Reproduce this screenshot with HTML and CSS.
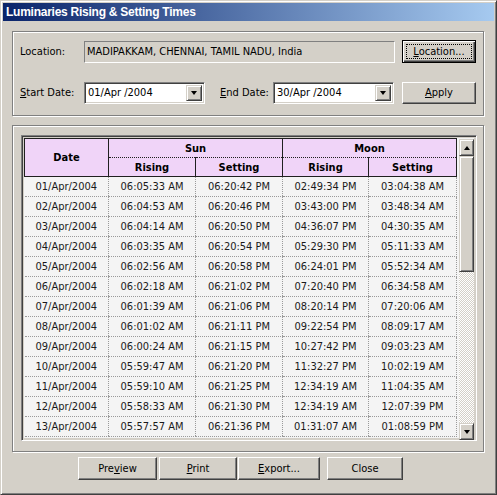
FILE: index.html
```html
<!DOCTYPE html>
<html>
<head>
<meta charset="utf-8">
<link rel="stylesheet" href="styles.css">
</head>
<body>
<div class="window">
  <div class="titlebar">Luminaries Rising &amp; Setting Times</div>
  <div class="content">
    <div class="group group-top">
      <div class="row row1">
        <span class="label lbl-loc">Location:</span>
        <div class="field">MADIPAKKAM, CHENNAI, TAMIL NADU, India</div>
        <button class="btn btn-default"><span class="focus"><u>L</u>ocation...</span></button>
      </div>
      <div class="row row2">
        <span class="label lbl-start"><u>S</u>tart Date:</span>
        <div class="combo"><span class="combo-text">01/Apr /2004</span><span class="drop"><span class="tri"></span></span></div>
        <span class="label lbl-end"><u>E</u>nd Date:</span>
        <div class="combo"><span class="combo-text">30/Apr /2004</span><span class="drop"><span class="tri"></span></span></div>
        <button class="btn btn-apply"><u>A</u>pply</button>
      </div>
    </div>
    <div class="group group-table">
      <div class="frame">
        <div class="grid-wrap">
          <table class="grid">
            <colgroup><col class="c1"><col class="c2"><col class="c3"><col class="c4"><col class="c5"></colgroup>
            <thead>
              <tr><th rowspan="2" class="h-date">Date</th><th colspan="2">Sun</th><th colspan="2">Moon</th></tr>
              <tr><th>Rising</th><th>Setting</th><th>Rising</th><th>Setting</th></tr>
            </thead>
            <tbody>
              <tr><td>01/Apr/2004</td><td>06:05:33 AM</td><td>06:20:42 PM</td><td>02:49:34 PM</td><td>03:04:38 AM</td></tr>
              <tr><td>02/Apr/2004</td><td>06:04:53 AM</td><td>06:20:46 PM</td><td>03:43:00 PM</td><td>03:48:34 AM</td></tr>
              <tr><td>03/Apr/2004</td><td>06:04:14 AM</td><td>06:20:50 PM</td><td>04:36:07 PM</td><td>04:30:35 AM</td></tr>
              <tr><td>04/Apr/2004</td><td>06:03:35 AM</td><td>06:20:54 PM</td><td>05:29:30 PM</td><td>05:11:33 AM</td></tr>
              <tr><td>05/Apr/2004</td><td>06:02:56 AM</td><td>06:20:58 PM</td><td>06:24:01 PM</td><td>05:52:34 AM</td></tr>
              <tr><td>06/Apr/2004</td><td>06:02:18 AM</td><td>06:21:02 PM</td><td>07:20:40 PM</td><td>06:34:58 AM</td></tr>
              <tr><td>07/Apr/2004</td><td>06:01:39 AM</td><td>06:21:06 PM</td><td>08:20:14 PM</td><td>07:20:06 AM</td></tr>
              <tr><td>08/Apr/2004</td><td>06:01:02 AM</td><td>06:21:11 PM</td><td>09:22:54 PM</td><td>08:09:17 AM</td></tr>
              <tr><td>09/Apr/2004</td><td>06:00:24 AM</td><td>06:21:15 PM</td><td>10:27:42 PM</td><td>09:03:23 AM</td></tr>
              <tr><td>10/Apr/2004</td><td>05:59:47 AM</td><td>06:21:20 PM</td><td>11:32:27 PM</td><td>10:02:19 AM</td></tr>
              <tr><td>11/Apr/2004</td><td>05:59:10 AM</td><td>06:21:25 PM</td><td>12:34:19 AM</td><td>11:04:35 AM</td></tr>
              <tr><td>12/Apr/2004</td><td>05:58:33 AM</td><td>06:21:30 PM</td><td>12:34:19 AM</td><td>12:07:39 PM</td></tr>
              <tr><td>13/Apr/2004</td><td>05:57:57 AM</td><td>06:21:36 PM</td><td>01:31:07 AM</td><td>01:08:59 PM</td></tr>
            </tbody>
          </table>
          <div class="scrollbar">
            <div class="sb-btn"><span class="tri-up"></span></div>
            <div class="sb-thumb"></div>
            <div class="sb-track"></div>
            <div class="sb-btn"><span class="tri"></span></div>
          </div>
        </div>
      </div>
    </div>
    <div class="buttons">
      <button class="btn b-prev">Pre<u>v</u>iew</button>
      <button class="btn b-print"><u>P</u>rint</button>
      <button class="btn b-export"><u>E</u>xport...</button>
      <button class="btn b-close">Close</button>
    </div>
  </div>
</div>
</body>
</html>
```
FILE: styles.css
```css
* { box-sizing: border-box; }
html, body { margin: 0; padding: 0; background: #d4d0c8; }
body {
  font-family: "DejaVu Sans Condensed", "DejaVu Sans", Tahoma, sans-serif;
  font-stretch: semi-condensed;
  font-size: 11px; color: #000;
}
u { text-decoration: underline; }

.window {
  width: 497px; height: 495px;
  background: #d4d0c8;
  border: 1px solid;
  border-color: #d4d0c8 #404040 #404040 #d4d0c8;
  box-shadow: inset 1px 1px 0 #fff, inset -1px -1px 0 #808080;
  padding: 2px;
}
.titlebar {
  height: 18px;
  background: linear-gradient(to right, #0a246a, #a6caf0);
  color: #fff;
  font-family: "Liberation Sans", Arial, sans-serif;
  font-stretch: normal;
  font-weight: bold;
  font-size: 12px;
  letter-spacing: -0.25px;
  line-height: 18px;
  padding-left: 3px;
}
.content { padding: 10px 10px 0 9px; }

.group {
  border: 1px solid #808080;
  box-shadow: 1px 1px 0 #fff, inset 1px 1px 0 #fff;
}
.group-top { height: 85px; padding: 8px 0 0 7px; }

.row { display: flex; align-items: center; }
.row1 { height: 23px; }
.row2 { margin-top: 18px; height: 23px; }
.label { white-space: nowrap; }
.lbl-loc, .lbl-start { width: 64px; }
.lbl-end { width: 53px; margin-left: 15px; }

.field {
  width: 311px; height: 22px;
  border: 1px solid;
  border-color: #808080 #fff #fff #808080;
  background: #d4d0c8;
  line-height: 20px;
  padding-left: 2px;
  white-space: nowrap; overflow: hidden;
}
.btn {
  font-family: inherit; font-stretch: inherit; font-size: 11px; color: #000;
  background: #d4d0c8;
  border: 1px solid;
  border-color: #fff #404040 #404040 #fff;
  box-shadow: inset -1px -1px 0 #808080;
  padding: 0; margin: 0;
  height: 23px;
}
.btn-default {
  margin-left: 7px; width: 74px;
  border: 1px solid #000;
  box-shadow: inset 1px 1px 0 #fff, inset -1px -1px 0 #404040, inset -2px -2px 0 #808080;
  padding: 3px;
}
.btn-default .focus {
  display: block; height: 100%;
  border: 1px dotted #000;
  line-height: 13px;
}
.combo {
  width: 121px; height: 22px;
  display: flex; align-items: stretch;
  background: #fff;
  border: 1px solid;
  border-color: #808080 #fff #fff #808080;
  box-shadow: inset 1px 1px 0 #404040, inset -1px -1px 0 #d4d0c8;
  padding: 2px;
}
.combo-text { flex: 1; line-height: 16px; padding-left: 1px; white-space: nowrap; }
.drop {
  width: 16px;
  background: #d4d0c8;
  border: 1px solid;
  border-color: #d4d0c8 #404040 #404040 #d4d0c8;
  box-shadow: inset 1px 1px 0 #fff, inset -1px -1px 0 #808080;
  display: flex; align-items: center; justify-content: center;
}
.tri { width: 0; height: 0; border-left: 3.5px solid transparent; border-right: 3.5px solid transparent; border-top: 4px solid #000; }
.tri-up { width: 0; height: 0; border-left: 3.5px solid transparent; border-right: 3.5px solid transparent; border-bottom: 4px solid #000; }
.btn-apply { margin-left: 8px; width: 74px; height: 22px; }

.group-table { margin-top: 9px; height: 327px; padding: 9px 8px 0 8px; }
.frame {
  width: 456px; height: 306px;
  border: 1px solid;
  border-color: #808080 #fff #fff #808080;
  box-shadow: inset 1px 1px 0 #404040, inset -1px -1px 0 #d4d0c8;
  padding: 2px 2px 2px 2px;
  overflow: hidden;
}
.grid-wrap { display: flex; height: 100%; background: #f4f4f4; }
.grid {
  border-collapse: collapse;
  table-layout: fixed;
  width: 433px;
  font-size: 11px;
  align-self: flex-start;
}
.c1 { width: 84px; } .c2 { width: 87px; } .c3 { width: 87px; } .c4 { width: 86px; } .c5 { width: 88px; }
.grid th {
  background: #f0d4f8;
  font-weight: bold;
  height: 19px;
  padding: 0;
  border: 1px solid #202020;
  border-bottom-style: dotted;
}
.grid thead tr:nth-child(2) th { border-top-style: dotted; border-bottom-style: solid; }
.grid th.h-date { border-bottom-style: solid; }
.grid td {
  height: 20px;
  padding: 0;
  text-align: center;
  border-bottom: 1px dotted #9a9a9a;
  border-left: 1px dotted #9a9a9a;
  white-space: nowrap;
  color: #1a1a1a;
}
.grid td:first-child { border-left: none; }
.grid td:last-child { border-right: 1px dotted #9a9a9a; }

.scrollbar {
  width: 17px; margin-left: 2px; margin-top: 1px;
  display: flex; flex-direction: column;
  height: 301px;
}
.sb-btn, .sb-thumb {
  background: #d4d0c8;
  border: 1px solid;
  border-color: #d4d0c8 #404040 #404040 #d4d0c8;
  box-shadow: inset 1px 1px 0 #fff, inset -1px -1px 0 #808080;
}
.sb-btn { height: 17px; display: flex; align-items: center; justify-content: center; }
.sb-thumb { height: 116px; }
.sb-track {
  flex: 1;
  background-color: #eae8e3;
  background-image: repeating-conic-gradient(#fff 0 25%, #d4d0c8 0 50%);
  background-size: 2px 2px;
}

.buttons { display: flex; margin-top: 5px; padding-left: 66px; }
.b-prev { width: 79px; }
.b-print { width: 78px; margin-left: 2px; }
.b-export { width: 82px; margin-left: 1px; }
.b-close { width: 76px; margin-left: 7px; }
```
